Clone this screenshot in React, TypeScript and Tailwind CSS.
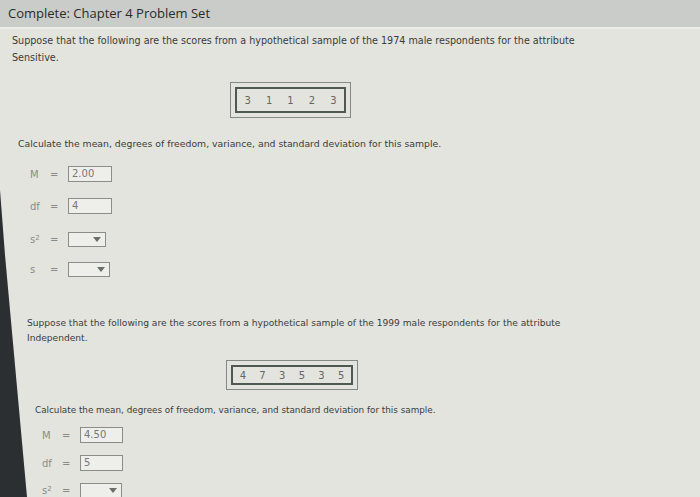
import React from "react"

function Field({ value, w = "w-[44px]" }: { value: string; w?: string }) {
	return (
		<div className={`${w} h-[16px] border border-[#8a8d88] bg-[#eeefea] text-[#777] text-[10px] leading-[14px] pl-[3px]`}>
			{value}
		</div>
	)
}

function Drop({ w = "w-[40px]" }: { w?: string }) {
	return (
		<div className={`${w} h-[15px] border border-[#8a8d88] bg-[#eeefea] flex items-center justify-end pr-[4px]`}>
			<svg width="8" height="5" viewBox="0 0 8 5">
				<path d="M0 0 L8 0 L4 5 Z" fill="#6b6e6a" />
			</svg>
		</div>
	)
}

function Row({
	label,
	sup,
	children,
	className,
}: {
	label: string
	sup?: boolean
	children: React.ReactNode
	className: string
}) {
	return (
		<div className={`flex items-center text-[10px] text-[#8a8c88] ${className}`}>
			<div className="w-[20px]">
				{label}
				{sup && <sup className="text-[7px]">2</sup>}
			</div>
			<div className="w-[18px]">=</div>
			{children}
		</div>
	)
}

function Scores({ items, className }: { items: string[]; className: string }) {
	return (
		<div className={`border border-[#858a86] p-[4px] ${className}`}>
			<div className="border-2 border-[#4f5852] h-full flex items-center">
				{items.map((n, i) => (
					<div key={i} className="flex-1 text-center text-[10px] text-[#666]">
						{n}
					</div>
				))}
			</div>
		</div>
	)
}

export default function App() {
	return (
		<div className="relative w-[700px] h-[497px] overflow-hidden bg-[#e3e4de] font-['DejaVu_Sans',sans-serif] text-[#3a3b3a]">
			<div className="h-[29px] bg-[#c9ccc8] border-b-2 border-[#eceee9] flex items-center pl-[8px] font-['Open_Sans',sans-serif] text-[13px] text-[#2a2b2a]">
				Complete: Chapter 4 Problem Set
			</div>

			<p className="ml-[12px] mt-[3px] w-[620px] text-[9.6px] leading-[17px]">
				Suppose that the following are the scores from a hypothetical sample of the 1974 male respondents for the attribute
				<br />
				Sensitive.
			</p>

			<Scores items={["3", "1", "1", "2", "3"]} className="ml-[230px] mt-[16px] w-[121px] h-[36px]" />

			<p className="ml-[18px] mt-[19px] text-[9.3px] leading-[14px]">
				Calculate the mean, degrees of freedom, variance, and standard deviation for this sample.
			</p>

			<Row label="M" className="ml-[30px] mt-[15px]">
				<Field value="2.00" />
			</Row>
			<Row label="df" className="ml-[30px] mt-[16px]">
				<Field value="4" />
			</Row>
			<Row label="s" sup className="ml-[30px] mt-[18px]">
				<Drop w="w-[38px]" />
			</Row>
			<Row label="s" className="ml-[30px] mt-[15px]">
				<Drop w="w-[42px]" />
			</Row>

			<p className="ml-[27px] mt-[39px] w-[620px] text-[9.1px] leading-[15px]">
				Suppose that the following are the scores from a hypothetical sample of the 1999 male respondents for the attribute
				<br />
				Independent.
			</p>

			<Scores items={["4", "7", "3", "5", "3", "5"]} className="ml-[226px] mt-[14px] w-[132px] h-[30px]" />

			<p className="ml-[35px] mt-[13px] text-[8.8px] leading-[14px]">
				Calculate the mean, degrees of freedom, variance, and standard deviation for this sample.
			</p>

			<Row label="M" className="ml-[42px] mt-[10px]">
				<Field value="4.50" w="w-[43px]" />
			</Row>
			<Row label="df" className="ml-[42px] mt-[12px]">
				<Field value="5" w="w-[43px]" />
			</Row>
			<Row label="s" sup className="ml-[42px] mt-[12px]">
				<Drop w="w-[42px]" />
			</Row>

			{/* monitor bezel visible at the left edge of the photo */}
			<div className="absolute inset-0 bg-[#2c2f31] [clip-path:polygon(0_190px,5px_255px,27px_497px,0_497px)]" />
		</div>
	)
}
